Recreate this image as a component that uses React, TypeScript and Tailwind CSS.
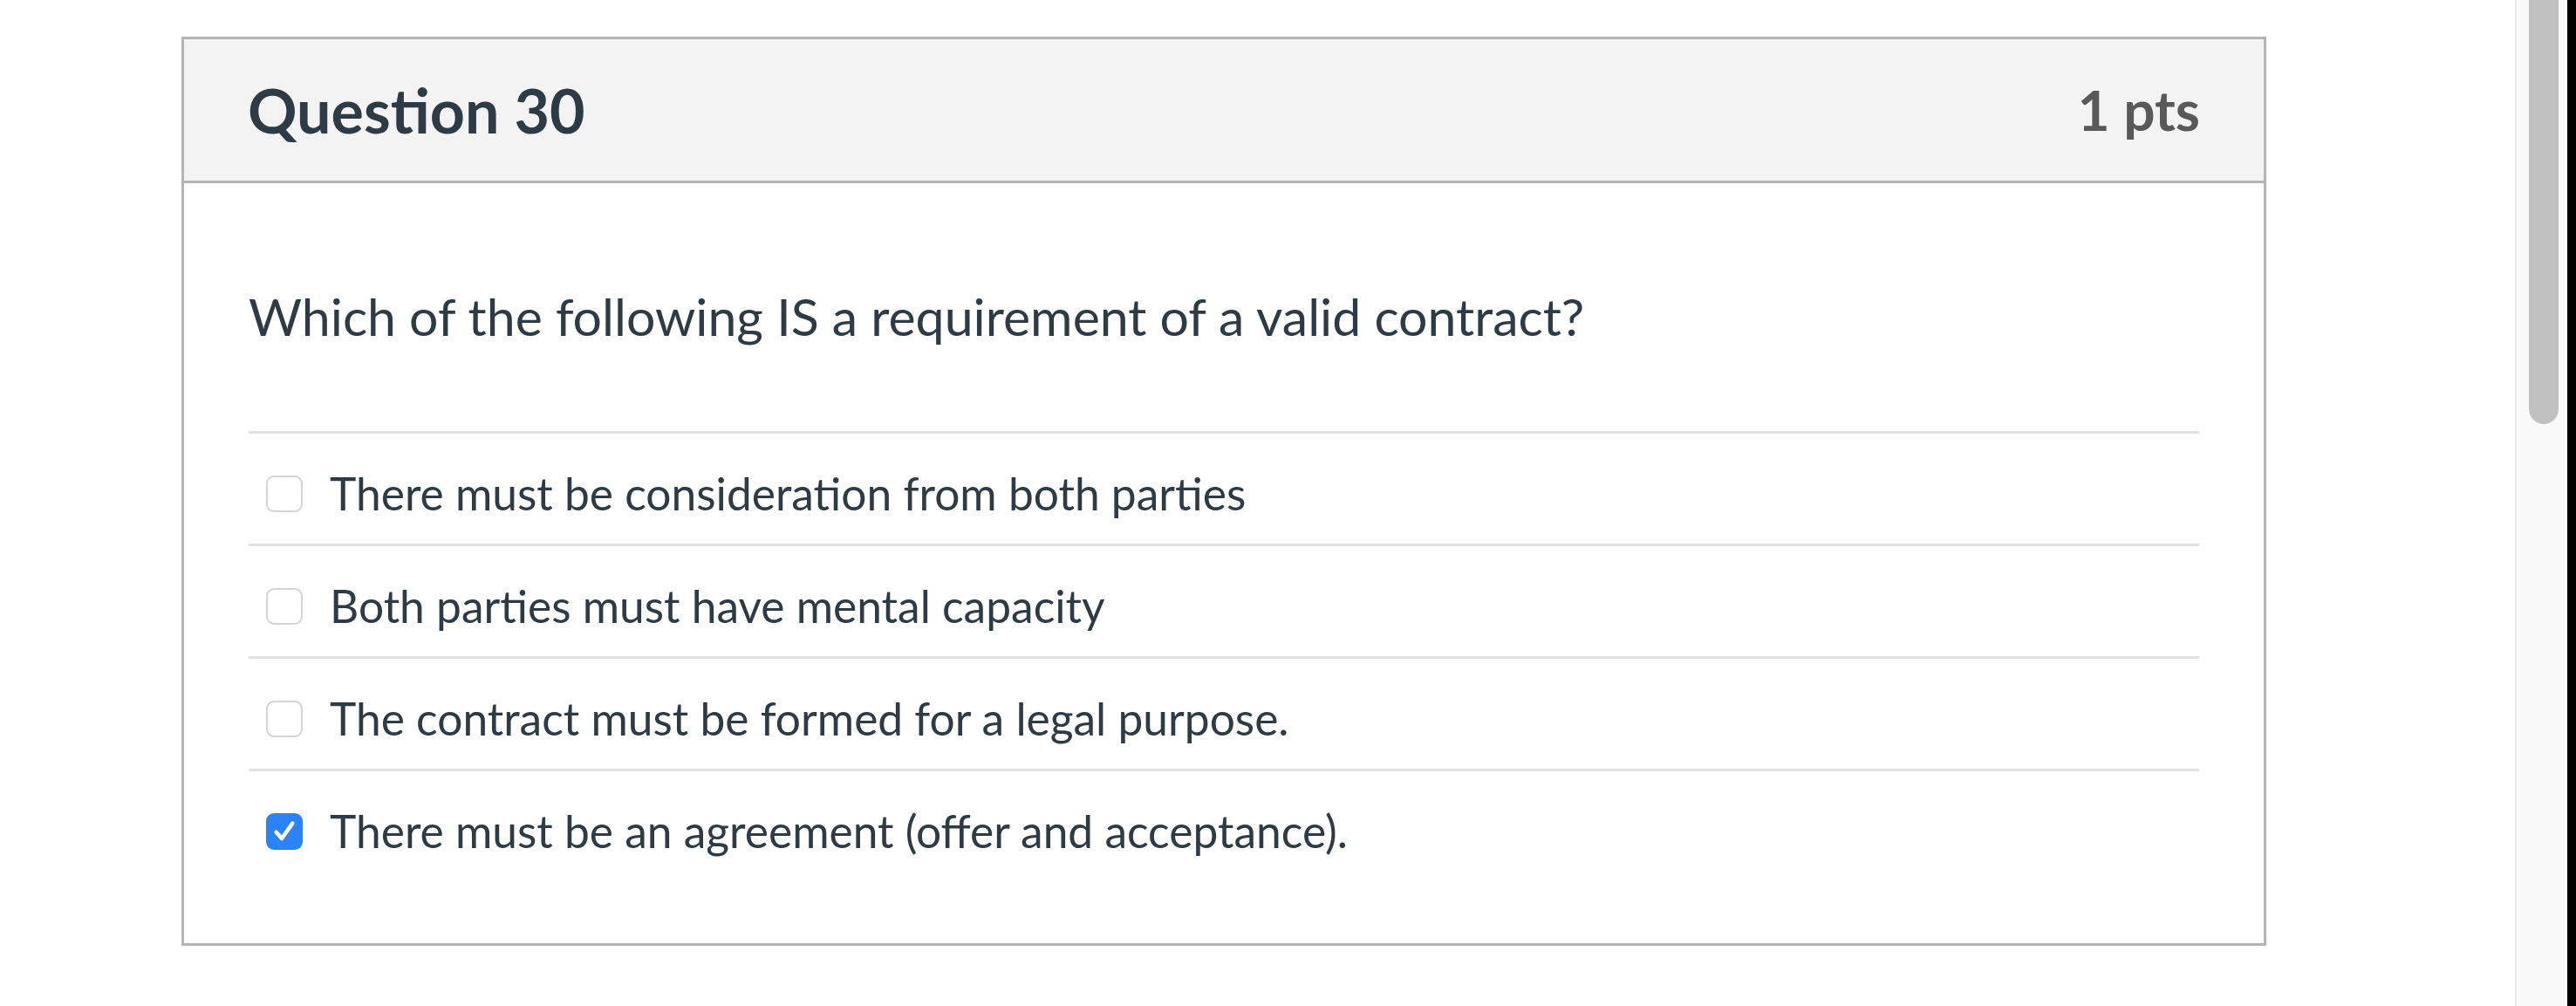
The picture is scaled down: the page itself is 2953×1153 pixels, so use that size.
import React from "react";

const options = [
  { text: "There must be consideration from both parties", checked: false },
  { text: "Both parties must have mental capacity", checked: false },
  { text: "The contract must be formed for a legal purpose.", checked: false },
  { text: "There must be an agreement (offer and acceptance).", checked: true },
];

function Box({ checked }: { checked: boolean }) {
  if (checked) {
    return (
      <div className="w-[42px] h-[42px] rounded-[9px] bg-[#2a84f6] flex items-center justify-center shrink-0">
        <svg width="32" height="32" viewBox="0 0 24 24" fill="none">
          <path d="M5 12.5 L9.8 18 L19 5" stroke="white" strokeWidth="3.4" strokeLinecap="round" strokeLinejoin="round" />
        </svg>
      </div>
    );
  }
  return <div className="w-[42px] h-[42px] rounded-[9px] border-2 border-[#d4d4d4] bg-white shrink-0" />;
}

export default function App() {
  return (
    <div className="w-[2953px] h-[1153px] bg-white flex overflow-hidden" style={{ fontFamily: "Lato, 'Open Sans', sans-serif" }}>
      <div className="flex-1 pl-[208px] pt-[42px]">
        <div className="w-[2390px] border-[3px] border-[#b4b4b4] bg-white">
          <div className="h-[165px] bg-[#f3f3f3] border-b-[3px] border-[#b4b4b4] px-[73px] flex items-center justify-between">
            <div className="text-[70px] font-bold text-[#2d3b45] leading-none">Question 30</div>
            <div className="text-[64px] font-bold text-[#595959] leading-none">1 pts</div>
          </div>
          <div className="px-[74px] pt-[109px] pb-[71px]">
            <div className="text-[59px] leading-[87px] text-[#2d3b45] mb-[88px]">
              Which of the following IS a requirement of a valid contract?
            </div>
            <div>
              {options.map((o) => (
                <div key={o.text} className="h-[129px] border-t-[3px] border-[#e2e2e2] pt-[12px] pl-[20px] flex items-center gap-[31px]">
                  <Box checked={o.checked} />
                  <div className="text-[51.5px] leading-none text-[#2d3b45]">{o.text}</div>
                </div>
              ))}
            </div>
          </div>
        </div>
      </div>
      <div className="w-[60px] h-full bg-[#f9f9f9] border-l-2 border-[#e8e8e8] pl-[14px]">
        <div className="w-[34px] h-[486px] bg-[#c1c1c1] rounded-b-full" />
      </div>
      <div className="w-[10px] h-full bg-black" />
    </div>
  );
}
